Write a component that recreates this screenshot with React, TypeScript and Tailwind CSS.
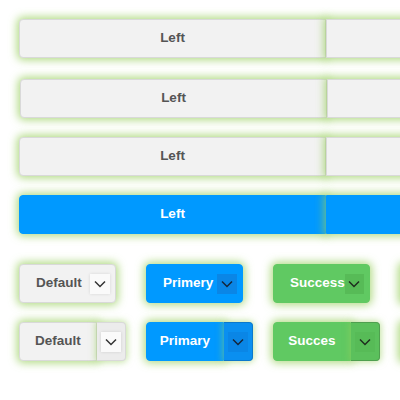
import type { ReactNode } from "react";

const glow = "shadow-[0_0_9px_2px_rgba(150,205,90,0.75)]";

type Tone = "default" | "primary" | "success";

const tones: Record<Tone, { body: string; caret: string; icon: string; split: string }> = {
  default: {
    body: "bg-[#f2f2f2] border border-[#d9d9d9] text-[#555555]",
    caret: "bg-[#fafafa] shadow-[0_0_3px_rgba(0,0,0,0.12)]",
    icon: "#333333",
    split: "bg-[#ececec] border border-[#d9d9d9]",
  },
  primary: {
    body: "bg-[#0099ff] border border-[#0099ff] text-white",
    caret: "bg-[#0a86e6]",
    icon: "#15263a",
    split: "bg-[#0a8ff0] border border-[#0b78cc]",
  },
  success: {
    body: "bg-[#60c962] border border-[#60c962] text-white",
    caret: "bg-[#57bb57]",
    icon: "#1f2d1f",
    split: "bg-[#5bc05c] border border-[#4f9f4f]",
  },
};

function Chevron({ color }: { color: string }) {
  return (
    <svg width="12" height="8" viewBox="0 0 12 8" fill="none">
      <path d="M1 1.5 L6 6.5 L11 1.5" stroke={color} strokeWidth="1.5" />
    </svg>
  );
}

function CaretBox({ tone }: { tone: Tone }) {
  return (
    <span className={`w-5 h-5 flex items-center justify-center ${tones[tone].caret}`}>
      <Chevron color={tones[tone].icon} />
    </span>
  );
}

function WideRow({ tone, className = "" }: { tone: "default" | "primary"; className?: string }) {
  const t = tones[tone];
  return (
    <div className={`flex w-max ${className}`}>
      <div
        className={`w-[307px] h-[39px] rounded-l-[4px] flex items-center justify-center text-[13.5px] font-bold ${t.body} ${glow}`}
      >
        Left
      </div>
      <div className={`w-[307px] h-[39px] rounded-r-[4px] ${t.body} ${glow}`} />
    </div>
  );
}

function DropButton({ tone, children }: { tone: Tone; children?: ReactNode }) {
  return (
    <div
      className={`w-[97px] h-[39px] rounded-[4px] flex items-center justify-between pl-4 pr-[5px] text-[13.5px] font-bold shrink-0 ${tones[tone].body} ${glow}`}
    >
      <span>{children}</span>
      <CaretBox tone={tone} />
    </div>
  );
}

function SplitButton({ tone, children }: { tone: Tone; children?: ReactNode }) {
  const t = tones[tone];
  return (
    <div className="flex shrink-0">
      <div
        className={`w-[78px] h-[39px] rounded-l-[4px] flex items-center justify-center text-[13.5px] font-bold ${t.body} ${glow}`}
      >
        {children}
      </div>
      <div
        className={`w-[29px] h-[39px] rounded-r-[4px] border-l-0 flex items-center justify-center ${t.split} shadow-[0_0_7px_1px_rgba(150,205,90,0.6)]`}
      >
        <CaretBox tone={tone} />
      </div>
    </div>
  );
}

export default function App() {
  return (
    <div
      className="w-[400px] h-[400px] overflow-hidden bg-white pt-[19px] pl-[19px]"
      style={{ fontFamily: '"Liberation Sans", Arial, sans-serif' }}
    >
      <WideRow tone="default" />
      <WideRow tone="default" className="mt-[21px] ml-px" />
      <WideRow tone="default" className="mt-[19px]" />
      <WideRow tone="primary" className="mt-[19px]" />

      <div className="flex gap-[30px] w-max mt-[30px]">
        <DropButton tone="default">Default</DropButton>
        <DropButton tone="primary">Primery</DropButton>
        <DropButton tone="success">Success</DropButton>
        <DropButton tone="default" />
      </div>

      <div className="flex gap-[20px] w-max mt-[19px]">
        <SplitButton tone="default">Default</SplitButton>
        <SplitButton tone="primary">Primary</SplitButton>
        <SplitButton tone="success">Succes</SplitButton>
        <SplitButton tone="default" />
      </div>
    </div>
  );
}
